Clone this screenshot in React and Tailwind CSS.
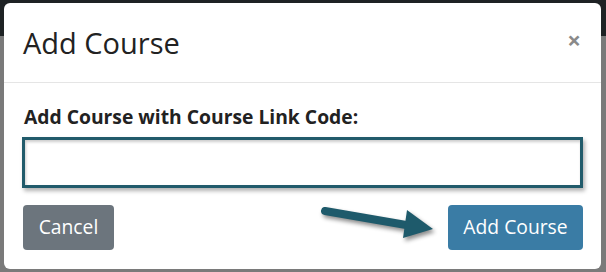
export default function App() {
  return (
    <div className="relative w-[606px] h-[272px] overflow-hidden bg-[#7a7a7a] font-['Open_Sans',sans-serif]">
      <div className="h-[36px] bg-[#1e2224]" />
      <div className="absolute left-[4px] top-[3px] w-[597px] h-[266px] bg-white rounded-[6px] flex flex-col">
        <div className="h-[80px] shrink-0 flex items-center justify-between pl-[19px] pr-[20px] border-b border-[#e5e5e5]">
          <h4 className="text-[29px] leading-none text-[#222]">Add Course</h4>
          <span className="text-[24px] font-bold leading-none text-[#8a8a8a] -mt-[6px]">×</span>
        </div>
        <div className="flex flex-col px-[18px] pt-[21px]">
          <label className="text-[19.3px] leading-[25px] font-bold text-[#222] pl-[2px]">
            Add Course with Course Link Code:
          </label>
          <input
            type="text"
            className="mt-[8px] h-[51px] w-full border-[3px] border-[#215b6b] bg-white outline-none shadow-[inset_1px_2px_3px_rgba(0,0,0,0.2),2px_3px_4px_rgba(0,0,0,0.3)]"
          />
          <div className="mt-[17px] flex items-center justify-between pl-[1px]">
            <button className="w-[91px] h-[45px] rounded-[4px] bg-[#6c757d] text-white text-[19.3px]">Cancel</button>
            <button className="w-[135px] h-[45px] rounded-[4px] bg-[#3a7ca5] text-white text-[19.3px]">Add Course</button>
          </div>
        </div>
      </div>
      <svg
        className="absolute left-0 top-0 pointer-events-none"
        width="606"
        height="272"
        viewBox="0 0 606 272"
        style={{ filter: "drop-shadow(2px 3px 2px rgba(0,0,0,0.45))" }}
      >
        <line x1="325" y1="211" x2="412" y2="226" stroke="#1e5a6b" strokeWidth="8" strokeLinecap="round" />
        <polygon points="407,210 433,229 403,238" fill="#1e5a6b" />
      </svg>
    </div>
  );
}
